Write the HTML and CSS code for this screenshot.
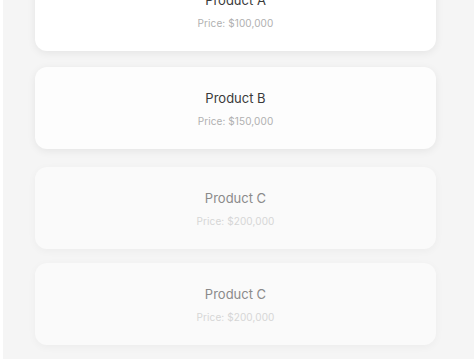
FILE: index.html
```html
<!DOCTYPE html>
<html>
<head>
<meta charset="utf-8">
<link rel="stylesheet" href="styles.css">
</head>
<body>
<div class="page">
  <div class="list">
    <div class="card">
      <div class="title">Product A</div>
      <div class="price">Price: $100,000</div>
    </div>
    <div class="card card-b">
      <div class="title">Product B</div>
      <div class="price">Price: $150,000</div>
    </div>
    <div class="card faded entering">
      <div class="title">Product C</div>
      <div class="price">Price: $200,000</div>
    </div>
    <div class="card faded">
      <div class="title">Product C</div>
      <div class="price">Price: $200,000</div>
    </div>
  </div>
</div>
</body>
</html>
```
FILE: styles.css
```css
html, body {
  margin: 0;
  padding: 0;
  background: #ffffff;
  overflow: hidden;
}
body {
  font-family: Inter, "Noto Sans", sans-serif;
}
.page {
  margin-left: 3px;
  height: 359px;
  background: #f5f5f5;
  overflow: hidden;
  padding: 0 32px;
}
.list {
  margin-top: -31px;
  width: 401px;
  display: flex;
  flex-direction: column;
  gap: 16px;
}
.card {
  height: 82px;
  box-sizing: border-box;
  background: #ffffff;
  border-radius: 12px;
  box-shadow: 0 2px 8px rgba(0, 0, 0, 0.07);
  display: flex;
  flex-direction: column;
  align-items: center;
  justify-content: center;
  gap: 9px;
  padding-top: 1px;
}
.card-b {
  background: #fdfdfd;
}
.title {
  font-size: 13px;
  color: #3a3a3a;
  line-height: 16px;
}
.price {
  font-size: 10px;
  letter-spacing: 0.1px;
  color: #b0b0b0;
  line-height: 13px;
}
.faded {
  background: #fafafa;
  box-shadow: 0 2px 8px rgba(0, 0, 0, 0.04);
}
.entering {
  transform: translateY(2px);
}
.faded .title {
  color: #8a8a8a;
}
.faded .price {
  color: #d6d6d6;
}
```
